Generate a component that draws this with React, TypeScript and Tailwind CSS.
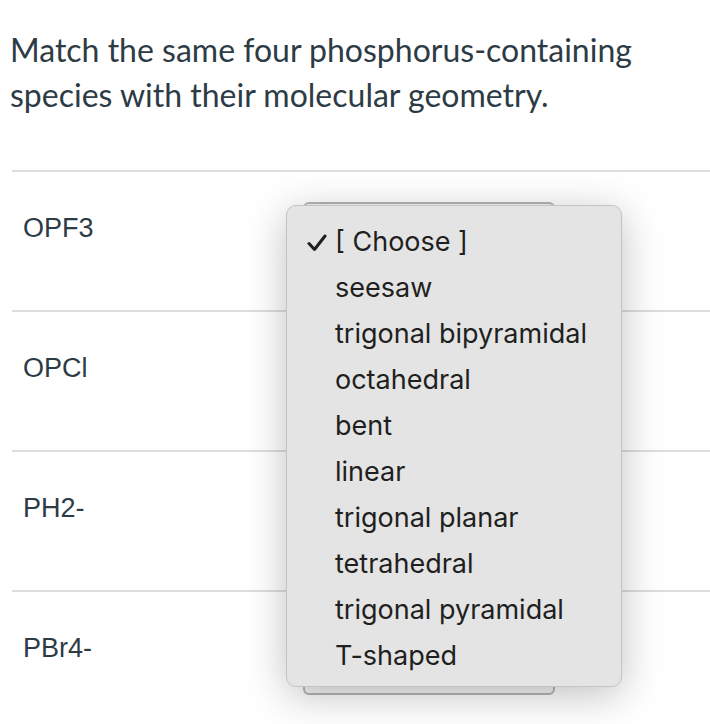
import React from "react";

const rows = ["OPF3", "OPCl", "PH2-", "PBr4-"];
const options = [
  "[ Choose ]",
  "seesaw",
  "trigonal bipyramidal",
  "octahedral",
  "bent",
  "linear",
  "trigonal planar",
  "tetrahedral",
  "trigonal pyramidal",
  "T-shaped",
];

export default function App() {
  return (
    <div className="relative w-[710px] h-[724px] overflow-hidden bg-white">
      <p className="pl-[10px] pt-[27px] pr-[60px] text-[32px] leading-[45px] text-[#2d3b45] font-['Lato',sans-serif]">
        Match the same four phosphorus-containing species with their molecular geometry.
      </p>
      <div className="ml-[12px] mt-[53px]">
        {rows.map((r) => (
          <div key={r} className="h-[140px] border-t-2 border-[#dddddd] flex">
            <div className="w-[291px] pl-[11px] pt-[40px] text-[27px] leading-[32px] text-[#2d3b45] font-['Liberation_Sans',sans-serif]">
              {r}
            </div>
            <div className="pt-[30px]">
              <div className="w-[252px] h-[73px] rounded-[6px] border-2 border-[#b5b5b5] bg-[#f5f5f5]" />
            </div>
          </div>
        ))}
      </div>
      <div className="absolute left-[286px] top-[205px] w-[336px] h-[482px] rounded-[10px] border border-[#c4c4c4] bg-[#e3e4e3] shadow-[0_8px_40px_rgba(0,0,0,0.25)] pt-[13px] font-['Inter',sans-serif]">
        {options.map((o, i) => (
          <div key={o} className="relative h-[46px] flex items-center pl-[48px] text-[27px] text-[#1f1f1f]">
            {i === 0 && (
              <svg className="absolute left-[20px] top-[15px]" width="20" height="18" viewBox="0 0 20 18">
                <path d="M2 9.5 L7.5 15.5 L18 2" fill="none" stroke="#1f1f1f" strokeWidth="3" strokeLinecap="round" strokeLinejoin="round" />
              </svg>
            )}
            {o}
          </div>
        ))}
      </div>
    </div>
  );
}
